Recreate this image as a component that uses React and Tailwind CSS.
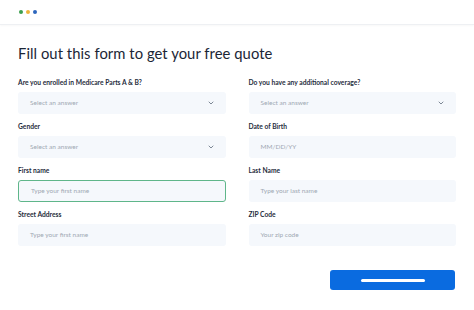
import React from 'react';

const Chevron = () => (
  <svg width="6" height="4" viewBox="0 0 6 4" className="text-[#7d8896]">
    <path d="M1 1l2 2 2-2" fill="none" stroke="currentColor" strokeWidth="1" strokeLinecap="round" strokeLinejoin="round" />
  </svg>
);

function Field({ label, placeholder, select, active }) {
  return (
    <div className="flex flex-col">
      <label className="text-[6.7px] leading-[10px] font-bold text-[#1f2d3d] mb-[5px]">{label}</label>
      <div
        className={`h-[22px] rounded-[3px] bg-[#f5f8fc] flex items-center justify-between pl-[12px] pr-[12px] ${
          active ? 'border-[1.5px] border-[#5fb68a] pl-[11px]' : ''
        }`}
      >
        <span className="text-[6.5px] text-[#a0a8b3]">{placeholder}</span>
        {select && <Chevron />}
      </div>
    </div>
  );
}

export default function App() {
  const fields = [
    { label: 'Are you enrolled in Medicare Parts A & B?', placeholder: 'Select an answer', select: true },
    { label: 'Do you have any additional coverage?', placeholder: 'Select an answer', select: true },
    { label: 'Gender', placeholder: 'Select an answer', select: true },
    { label: 'Date of Birth', placeholder: 'MM/DD/YY' },
    { label: 'First name', placeholder: 'Type your first name', active: true },
    { label: 'Last Name', placeholder: 'Type your last name' },
    { label: 'Street Address', placeholder: 'Type your first name' },
    { label: 'ZIP Code', placeholder: 'Your zip code' },
  ];

  return (
    <div className="w-[474px] h-[310px] bg-white overflow-hidden" style={{ fontFamily: 'Lato, "Noto Sans", sans-serif' }}>
      <div className="h-[25px] border-b border-[#eef0f3] shadow-[0_1px_2px_rgba(0,0,0,0.03)] flex items-center gap-[3px] pl-[19px]">
        <span className="w-[4px] h-[4px] rounded-full bg-[#3c9f4f]" />
        <span className="w-[4px] h-[4px] rounded-full bg-[#efb43a]" />
        <span className="w-[4px] h-[4px] rounded-full bg-[#2d66bd]" />
      </div>
      <div className="px-[18px]">
        <h1 className="mt-[18px] text-[14.8px] leading-[20px] text-[#1b2636] tracking-[0.05px]">
          Fill out this form to get your free quote
        </h1>
        <div className="mt-[14px] grid grid-cols-2 gap-x-[23px] gap-y-[7px]">
          {fields.map((f) => (
            <Field key={f.label} {...f} />
          ))}
        </div>
        <div className="mt-[24px] flex justify-end pr-[1px]">
          <button className="w-[125px] h-[20px] rounded-[3px] bg-[#0a6be0] flex items-center justify-center">
            <span className="w-[64px] h-[3px] rounded-full bg-white" />
          </button>
        </div>
      </div>
    </div>
  );
}
